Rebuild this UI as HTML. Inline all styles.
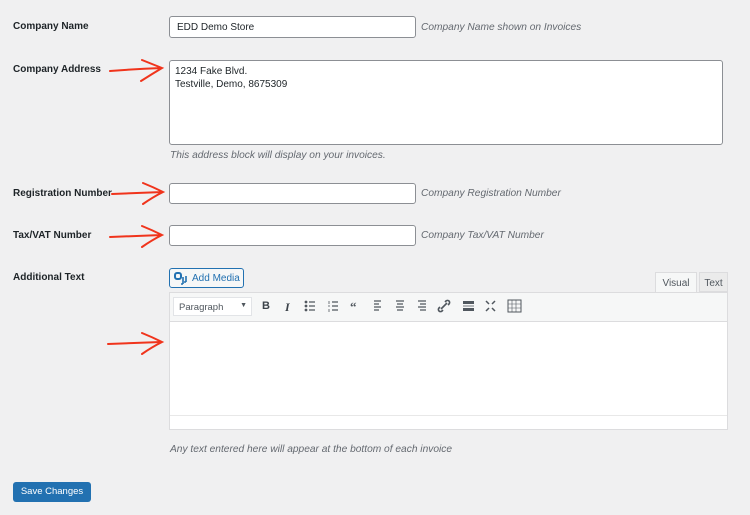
<!DOCTYPE html>
<html><head><style>
body{margin:0;width:750px;height:515px;background:#f0f0f1;font-family:"Liberation Sans",sans-serif;position:relative;overflow:hidden;color:#1d2327}
.a{position:absolute}
.lbl{font-size:10px;font-weight:bold;color:#1d2327}
.inp{background:#fff;border:1px solid #8c8f94;border-radius:3px;box-sizing:border-box}
.help{font-size:10.2px;font-style:italic;color:#646970}
.tb{position:absolute;top:300px;font-size:11px;color:#3c434a;font-weight:bold}
</style></head><body>
<div class="a lbl" style="left:13px;top:21px">Company Name</div>
<div class="a inp" style="left:169px;top:16px;width:247px;height:22px;font-size:10px;padding:5px 7px">EDD Demo Store</div>
<div class="a help" style="left:421px;top:22px">Company Name shown on Invoices</div>

<div class="a lbl" style="left:13px;top:64px">Company Address</div>
<div class="a inp" style="left:169px;top:60px;width:554px;height:85px;font-size:10px;padding:4px 5px;line-height:13px">1234 Fake Blvd.<br>Testville, Demo, 8675309</div>
<div class="a help" style="left:170px;top:150px">This address block will display on your invoices.</div>

<div class="a lbl" style="left:13px;top:188px">Registration Number</div>
<div class="a inp" style="left:169px;top:183px;width:247px;height:21px"></div>
<div class="a help" style="left:421px;top:188px">Company Registration Number</div>

<div class="a lbl" style="left:13px;top:230px">Tax/VAT Number</div>
<div class="a inp" style="left:169px;top:225px;width:247px;height:21px"></div>
<div class="a help" style="left:421px;top:230px">Company Tax/VAT Number</div>

<div class="a lbl" style="left:13px;top:272px">Additional Text</div>
<div class="a" style="left:169px;top:268px;width:75px;height:20px;box-sizing:border-box;border:1px solid #2271b1;border-radius:3px;background:#f6f7f7;color:#2271b1;font-size:10px;padding:4px 0 0 22px">Add Media</div>
<svg class="a" style="left:174px;top:272px" width="14" height="13"><rect x="1" y="1" width="6" height="6" rx="2" fill="none" stroke="#2271b1" stroke-width="2"/><path d="M9 5v7M12 4v6M9 12h-2M12 10h-2" stroke="#2271b1" stroke-width="1.6" fill="none"/></svg>
<div class="a" style="left:655px;top:272px;width:42px;height:21px;box-sizing:border-box;background:#f6f7f7;border:1px solid #dcdcde;border-bottom:none;font-size:10px;color:#50575e;text-align:center;padding-top:5px">Visual</div>
<div class="a" style="left:699px;top:272px;width:29px;height:20px;box-sizing:border-box;background:#ebebeb;border:1px solid #dcdcde;font-size:10px;color:#50575e;text-align:center;padding-top:5px">Text</div>
<div class="a" style="left:169px;top:292px;width:559px;height:138px;box-sizing:border-box;border:1px solid #dcdcde;background:#fff"></div>
<div class="a" style="left:170px;top:293px;width:557px;height:28px;background:#f6f7f7;border-bottom:1px solid #dcdcde"></div>
<div class="a" style="left:170px;top:415px;width:557px;height:1px;background:#e8e8e8"></div>
<div class="a" style="left:173px;top:297px;width:79px;height:19px;box-sizing:border-box;background:#fff;border:1px solid #e2e4e7;font-size:9.5px;color:#50575e;padding:4px 5px">Paragraph<span style="position:absolute;right:4px;top:4px;font-size:7px">▼</span></div>
<div class="tb" style="left:262px">B</div>
<div class="tb" style="left:285px;font-style:italic;font-family:'Liberation Serif',serif;font-size:12px">I</div>
<svg class="a" style="left:300px;top:298px" width="230" height="16" fill="#50575e" stroke="#50575e">
<g stroke-width="1.2"><path d="M9 4h6M9 8h6M9 12h6M32 4h6M32 8h6M32 12h6"/><circle cx="6" cy="4" r=".8"/><circle cx="6" cy="8" r=".8"/><circle cx="6" cy="12" r=".8"/><path d="M29 3v3M29 7v2M29 11v3" stroke-width=".8"/></g>
<text x="50" y="13" font-size="13" font-weight="bold" stroke="none" font-family="Liberation Serif">“</text>
<g stroke-width="1.2"><path d="M74 3h7M74 6h5M74 9h7M74 12h5M96 3h8M97 6h6M96 9h8M97 12h6M118 3h8M120 6h6M118 9h8M120 12h6"/></g>
<path d="M141 11l6-6M140 9l-1 1a2 2 0 003 3l1-1M148 7l1-1a2 2 0 00-3-3l-1 1" fill="none" stroke-width="1.6"/>
<rect x="163" y="3" width="11" height="3" stroke="none"/><rect x="163" y="10" width="11" height="3" stroke="none"/><path d="M163 8h11" stroke-width=".8"/>
<path d="M186 3l3 3M195 3l-3 3M186 13l3-3M195 13l-3-3" stroke-width="1.5"/>
<rect x="208" y="2" width="13" height="12" fill="none" stroke-width="1"/><path d="M208 6h13M208 10h13M212 2v12M216 2v12" stroke-width=".6"/>
</svg>
<div class="a help" style="left:170px;top:444px">Any text entered here will appear at the bottom of each invoice</div>
<div class="a" style="left:13px;top:482px;width:78px;height:20px;background:#2271b1;border-radius:3px;color:#fff;font-size:9.5px;text-align:center;line-height:20px">Save Changes</div>
<svg class="a" style="left:0;top:0" width="750" height="515" fill="none" stroke="#f0341c" stroke-width="2" stroke-linecap="round">
<path d="M110 71q25-2 52-3M142 60q10 4 20 8q-10 6-21 13"/>
<path d="M112 194q25-1 51-2M143 183q10 4 20 9q-10 5-20 12"/>
<path d="M110 237q25-1 52-2M142 226q10 4 20 9q-10 5-20 12"/>
<path d="M108 344q25-1 53-2M142 333q10 4 20 9q-10 5-20 12"/>
</svg>
</body></html>
